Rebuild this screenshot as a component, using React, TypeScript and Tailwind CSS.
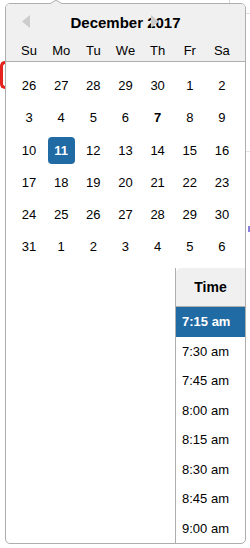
import React from 'react'

const dayNames = ['Su', 'Mo', 'Tu', 'We', 'Th', 'Fr', 'Sa']

const weeks: number[][] = [
  [26, 27, 28, 29, 30, 1, 2],
  [3, 4, 5, 6, 7, 8, 9],
  [10, 11, 12, 13, 14, 15, 16],
  [17, 18, 19, 20, 21, 22, 23],
  [24, 25, 26, 27, 28, 29, 30],
  [31, 1, 2, 3, 4, 5, 6],
]

const times = ['7:15 am', '7:30 am', '7:45 am', '8:00 am', '8:15 am', '8:30 am', '8:45 am', '9:00 am']

function Day({ n, selected, today }: { n: number; selected?: boolean; today?: boolean }) {
  return (
    <div className="flex h-[32.2px] items-center justify-center">
      <div
        className={
          selected
            ? 'flex h-[27px] w-[27px] items-center justify-center rounded-[4px] bg-[#216ba5] font-bold text-white'
            : today
              ? 'flex h-[27px] w-[27px] items-center justify-center font-bold'
              : 'flex h-[27px] w-[27px] items-center justify-center'
        }
      >
        {n}
      </div>
    </div>
  )
}

export default function App() {
  return (
    <div className="relative h-[548px] w-[250px] overflow-hidden bg-white pl-[5px] pt-[3px] font-['Liberation_Sans',Arial,sans-serif] text-black">
      {/* bits of the page behind the popup */}
      <div className="absolute left-[229px] top-0 h-[4px] w-px bg-[#d6d6d6]" />
      <div className="absolute left-[245px] top-[13px] h-px w-[5px] bg-[#dcdcdc]" />
      <div className="absolute left-[245px] top-[151px] h-px w-[5px] bg-[#e4e4e4]" />
      <div className="absolute left-[0px] top-[61px] h-[28px] w-[9px] rounded-l-[5px] border-[3px] border-r-0 border-[#e5231f]" />
      <div className="absolute left-[248px] top-[226px] h-[6px] w-[2px] bg-[#8c80dc]" />

      <div className="relative flex h-[541px] w-[241px] flex-col rounded-[5px] border border-[#aeaeae] bg-white">
        {/* pointer */}
        <svg className="absolute left-[42px] top-[-4px]" width="16" height="5" viewBox="0 0 16 5">
          <path d="M0 5 L8 0 L16 5 Z" fill="#f0f0f0" />
          <path d="M0 5 L8 0 L16 5" fill="none" stroke="#aeaeae" strokeWidth="1" />
        </svg>

        {/* month header */}
        <div className="relative h-[63px] rounded-t-[4px] border-b border-[#aeaeae] bg-[#f0f0f0] px-[7px]">
          <div className="pt-[10px] text-center text-[15px] font-bold leading-[18px]">December 2017</div>
          <svg className="absolute left-[16px] top-[11px]" width="8" height="13" viewBox="0 0 8 13">
            <path d="M8 0 L0 6.5 L8 13 Z" fill="#cccccc" />
          </svg>
          <svg className="absolute left-[145px] top-[11px]" width="8" height="13" viewBox="0 0 8 13">
            <path d="M0 0 L8 6.5 L0 13 Z" fill="#cccccc" />
          </svg>
          <div className="mt-[11px] grid grid-cols-7 text-[13px] leading-[16px]">
            {dayNames.map((d) => (
              <div key={d} className="text-center">
                {d}
              </div>
            ))}
          </div>
        </div>

        {/* days */}
        <div className="grid grid-cols-7 px-[7px] pt-[7.5px] text-[13px]">
          {weeks.map((w, wi) =>
            w.map((n, di) => (
              <Day key={`${wi}-${di}`} n={n} selected={wi === 2 && di === 1} today={wi === 1 && di === 4} />
            )),
          )}
        </div>

        {/* time column */}
        <div className="mt-[5px] flex flex-1 justify-end">
          <div className="flex w-[70px] flex-col border-l border-[#aeaeae]">
            <div className="flex h-[39px] items-center justify-center rounded-tl-[5px] border-b border-[#aeaeae] bg-[#f0f0f0] text-[14px] font-bold">
              Time
            </div>
            <div className="flex flex-col text-[13px]">
              {times.map((t, i) => (
                <div
                  key={t}
                  className={
                    i === 0
                      ? 'flex h-[29.5px] items-center bg-[#216ba5] pl-[6px] font-bold text-white'
                      : 'flex h-[29.5px] items-center pl-[6px]'
                  }
                >
                  {t}
                </div>
              ))}
            </div>
          </div>
        </div>
      </div>
    </div>
  )
}
